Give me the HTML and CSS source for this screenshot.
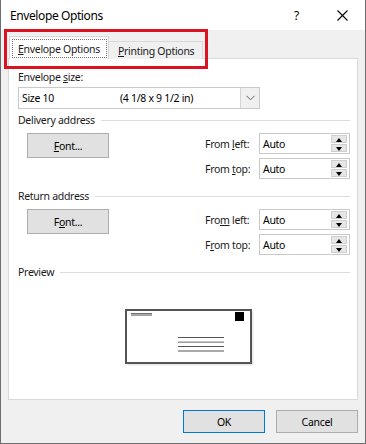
FILE: index.html
```html
<!DOCTYPE html>
<html>
<head>
<meta charset="utf-8">
<link rel="stylesheet" href="styles.css">
</head>
<body>
<div class="window">
  <div class="titlebar">
    <span class="title">Envelope Options</span>
    <span class="help">?</span>
    <svg class="close" width="11" height="11" viewBox="0 0 11 11"><path d="M0.5 0.5 L10.5 10.5 M10.5 0.5 L0.5 10.5" stroke="#000" stroke-width="1.1" fill="none"/></svg>
  </div>
  <div class="client">
    <div class="tabs">
      <div class="tab active"><span class="focus"><u>E</u>nvelope Options</span></div>
      <div class="tab"><span><u>P</u>rinting Options</span></div>
    </div>
    <div class="panel">
      <div class="label">Envelope <u>s</u>ize:</div>
      <div class="combo">
        <span class="combo-text"><span class="c1">Size 10</span><span class="c2">(4 1/8 x 9 1/2 in)</span></span>
        <span class="combo-btn"><svg width="9" height="6" viewBox="0 0 9 6"><path d="M0.5 0.8 L4.5 4.8 L8.5 0.8" stroke="#606060" stroke-width="1" fill="none"/></svg></span>
      </div>

      <div class="group-head first"><span>Delivery address</span><i></i></div>
      <div class="group-body">
        <button class="btn font-btn"><u>F</u>ont...</button>
        <div class="fields">
          <span class="flabel">From <u>l</u>eft:</span>
          <div class="spin"><span>Auto</span><span class="spin-btns"><b class="up"></b><b class="down"></b></span></div>
          <span class="flabel">From <u>t</u>op:</span>
          <div class="spin"><span>Auto</span><span class="spin-btns"><b class="up"></b><b class="down"></b></span></div>
        </div>
      </div>

      <div class="group-head"><span>Return address</span><i></i></div>
      <div class="group-body">
        <button class="btn font-btn">F<u>o</u>nt...</button>
        <div class="fields">
          <span class="flabel">Fro<u>m</u> left:</span>
          <div class="spin"><span>Auto</span><span class="spin-btns"><b class="up"></b><b class="down"></b></span></div>
          <span class="flabel">F<u>r</u>om top:</span>
          <div class="spin"><span>Auto</span><span class="spin-btns"><b class="up"></b><b class="down"></b></span></div>
        </div>
      </div>

      <div class="group-head"><span>Preview</span><i></i></div>
      <svg class="envelope" width="130" height="58" viewBox="0 0 130 58">
        <rect x="2.5" y="2.5" width="126" height="54" fill="#cfcfcf" opacity="0.5"/>
        <rect x="1" y="1" width="125" height="53" fill="#fff" stroke="#555" stroke-width="2"/>
        <rect x="6" y="4" width="21" height="1.5" fill="#707070"/>
        <rect x="6" y="5.5" width="21" height="1.5" fill="#a0a0a0"/>
        <rect x="110" y="3" width="9" height="9" fill="#000"/>
        <rect x="53" y="28" width="46" height="1" fill="#555"/>
        <rect x="53" y="32.5" width="46" height="1.3" fill="#8a8a8a"/>
        <rect x="53" y="37" width="46" height="1" fill="#555"/>
        <rect x="53" y="41.5" width="46" height="1" fill="#555"/>
      </svg>
    </div>
    <div class="actions">
      <button class="btn default">OK</button>
      <button class="btn">Cancel</button>
    </div>
  </div>
  <div class="annot"></div>
</div>
</body>
</html>
```
FILE: styles.css
```css
* { box-sizing: border-box; }
html, body { margin: 0; padding: 0; background: #fff; }
body {
  font-family: "Noto Sans", "Open Sans", sans-serif;
  font-size: 10.5px;
  letter-spacing: -0.3px;
  color: #000;
}
u { text-decoration: underline; text-underline-offset: 1px; }
.window {
  position: relative;
  width: 366px;
  height: 444px;
  border: 1px solid #6e6e6e;
  border-top: none;
  display: flex;
  flex-direction: column;
  background: #f0f0f0;
}
.titlebar {
  height: 30px;
  background: #fff;
  display: flex;
  align-items: center;
  padding-left: 9px;
  flex: none;
}
.title { font-size: 12px; letter-spacing: -0.4px; flex: 1; }
.help { font-size: 12px; margin-right: 38px; }
.close { margin-right: 17px; }
.client {
  flex: 1;
  display: flex;
  flex-direction: column;
  padding: 7px 7px 0 7px;
}
.tabs {
  display: flex;
  align-items: flex-end;
  height: 22px;
  margin-bottom: -1px;
  position: relative;
  z-index: 1;
}
.tab {
  height: 18px;
  border: 1px solid #d9d9d9;
  border-bottom: none;
  background: #f0f0f0;
  padding: 0 8px 0 9px;
  display: flex;
  align-items: center;
  color: #1a1a1a;
}
.tab.active {
  height: 23px;
  margin-left: 1px;
  background: #fff;
  border-color: #d9d9d9;
  padding: 2px 1px 1px 2px;
  margin-right: -1px;
}
.tab.active .focus {
  display: flex;
  align-items: center;
  height: 100%;
  padding: 0 6px 0 5px;
  border: 1px dotted #777;
}
.panel {
  height: 342px;
  background: #fff;
  border: 1px solid #d9d9d9;
  padding: 10px 7px 0 9px;
  display: flex;
  flex-direction: column;
}
.label { line-height: 16px; color: #1a1a1a; }
.combo {
  margin-top: 2px;
  width: 242px;
  height: 22px;
  border: 1px solid #c9c9c9;
  display: flex;
  align-items: stretch;
  background: #fff;
}
.combo-text { flex: 1; display: flex; align-items: center; padding-left: 3px; }
.c1 { width: 98px; }
.combo-btn {
  width: 19px;
  border-left: 1px solid #d4d4d4;
  background: #f0f0f0;
  display: flex;
  align-items: center;
  justify-content: center;
}
.group-head {
  display: flex;
  align-items: center;
  line-height: 16px;
  margin-top: 9px;
  color: #1a1a1a;
}
.group-head.first { margin-top: 3px; }
.group-head i {
  flex: 1;
  height: 1px;
  background: #dcdcdc;
  margin-left: 6px;
  margin-top: 1px;
}
.group-body {
  display: flex;
  justify-content: space-between;
  align-items: flex-start;
  margin-top: 5px;
}
.btn {
  font-family: inherit;
  font-size: 10.5px;
  letter-spacing: -0.3px;
  color: #000;
  background: #e1e1e1;
  border: 1px solid #adadad;
  padding: 0;
  width: 82px;
  height: 24px;
}
.font-btn { margin-left: 9px; height: 25px; }
.fields {
  display: grid;
  grid-template-columns: 54px 91px;
  row-gap: 4px;
  align-items: center;
}
.flabel { color: #1a1a1a; }
.spin {
  height: 21px;
  border: 1px solid #c9c9c9;
  display: flex;
  align-items: stretch;
  padding: 1px 1px 1px 3px;
  background: #fff;
}
.spin > span:first-child { flex: 1; display: flex; align-items: center; }
.spin-btns {
  width: 16px;
  margin: 0 1px 0 0;
  display: flex;
  flex-direction: column;
  gap: 1px;
}
.spin-btns b {
  flex: 1;
  background: #e6e6e6;
  border: 1px solid #cfcfcf;
  position: relative;
}
.spin-btns b::after {
  content: "";
  position: absolute;
  left: 4px;
  top: 2px;
  border-left: 3.5px solid transparent;
  border-right: 3.5px solid transparent;
}
.spin-btns b.up::after { border-bottom: 4px solid #000; }
.spin-btns b.down::after { border-top: 4px solid #000; top: 2px; }
.envelope { margin: 29px 0 0 107px; display: block; }
.actions {
  display: flex;
  justify-content: flex-end;
  gap: 11px;
  margin-top: 10px;
  padding-right: 0;
}
.actions .btn { width: 82px; height: 23px; }
.actions .btn.default { border: 1px solid #0078d7; }
.annot {
  position: absolute;
  left: 3px;
  top: 29px;
  width: 204px;
  height: 40px;
  border: 3px solid #d7141f;
  z-index: 2;
}
```
